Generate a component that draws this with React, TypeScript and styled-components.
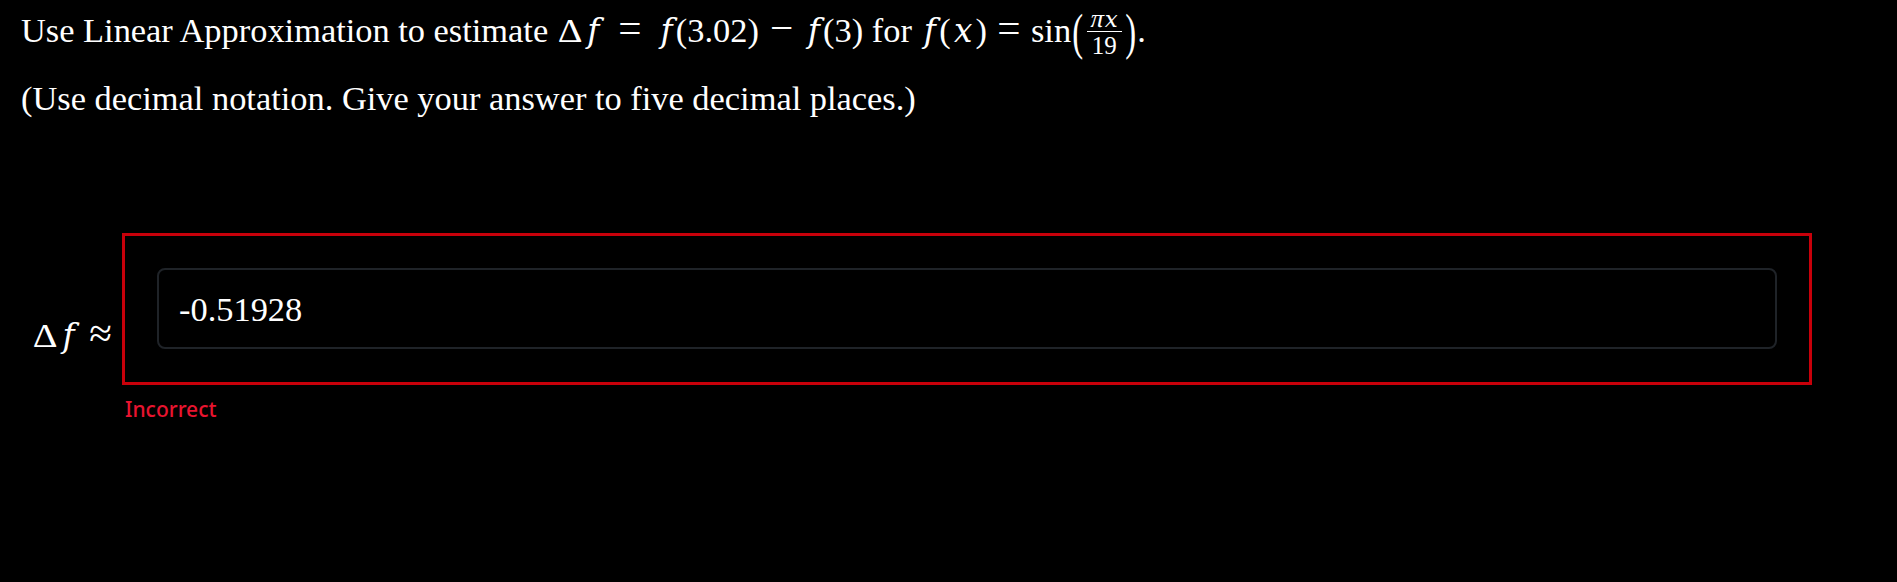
import React from 'react'
import styled, { createGlobalStyle } from 'styled-components'

const GlobalStyle = createGlobalStyle`
  body {
    margin: 0;
    background: #000;
    color: #fff;
    font-family: "Liberation Serif", "Times New Roman", serif;
  }
`

const App = (): React.ReactElement => (
  <>
    <GlobalStyle />
    <Page>
      <Paragraph $gap={30}>
        Use Linear Approximation to estimate{' '}
        <MathText>
          <Delta>Δ</Delta>
          <Var>f</Var>
          <Op $space={0.38}>=</Op>
          <Var>f</Var>(3.02)
          <Op $space={0.27}>−</Op>
          <Var>f</Var>(3)
        </MathText>{' '}
        for{' '}
        <MathText>
          <Var>f</Var>(<Var>x</Var>)
          <Op $space={0.25}>=</Op>
          sin
          <Paren>(</Paren>
          <Frac>
            <FracPart $top>
              <Pi>π</Pi>
              <Var>x</Var>
            </FracPart>
            <FracPart>19</FracPart>
          </Frac>
          <Paren>)</Paren>
        </MathText>
        .
      </Paragraph>
      <Paragraph $gap={0}>
        (Use decimal notation. Give your answer to five decimal places.)
      </Paragraph>

      <AnswerRow>
        <Label>
          <Delta>Δ</Delta>
          <Var>f</Var>
          <Op $space={0.28}>≈</Op>
        </Label>
        <FieldColumn>
          <ErrorFrame>
            <AnswerInput readOnly value="-0.51928" />
          </ErrorFrame>
          <Feedback>Incorrect</Feedback>
        </FieldColumn>
      </AnswerRow>
    </Page>
  </>
)

export default App

const Page = styled.div`
  padding: 8px 21px 0;
`

const Paragraph = styled.p<{ $gap: number }>`
  margin: 0 0 ${(p) => p.$gap}px;
  height: 40px;
  font-size: 34.4px;
  line-height: 40px;
  white-space: nowrap;
`

const MathText = styled.span`
  white-space: nowrap;
`

const Delta = styled.span`
  display: inline-block;
  transform: scaleX(1.12);
  margin: 0 3px 0 2px;
`

const Var = styled.i`
  margin: 0 0.1em;
  font-family: "DejaVu Serif", "Liberation Serif", serif;
  font-style: italic;
  font-size: 0.95em;
`

const Pi = styled.i`
  display: inline-block;
  font-style: normal;
  transform: skewX(-12deg);
  font-size: 1.05em;
  margin-right: 1px;
`

const Op = styled.span<{ $space: number }>`
  margin: 0 ${(p) => p.$space}em;
  font-size: 1.2em;
`

const Paren = styled.span`
  display: inline-block;
  transform: scale(0.95, 1.45);
  transform-origin: center;
  vertical-align: -2px;
  margin: 0 1px;
`

const Frac = styled.span`
  display: inline-flex;
  flex-direction: column;
  align-items: center;
  font-size: 25px;
  line-height: 22px;
  vertical-align: 15px;
  margin: -14px 2px;
`

const FracPart = styled.span<{ $top?: boolean }>`
  padding: ${(p) => (p.$top ? '0 4px 1px' : '3px 4px 0')};
  border-bottom: ${(p) => (p.$top ? '1.5px solid #fff' : 'none')};

  ${Var} {
    margin: 0;
    font-size: 0.92em;
  }
`

const AnswerRow = styled.div`
  display: flex;
  align-items: flex-start;
  margin-top: 115px;
  padding: 0 64px 0 11px;
`

const Label = styled.div`
  width: 78px;
  margin: 80px 12px 0 0;
  font-size: 34.4px;
  line-height: 40px;
  white-space: nowrap;
`

const FieldColumn = styled.div`
  flex: 1;
  display: flex;
  flex-direction: column;
`

const ErrorFrame = styled.div`
  border: 3px solid #c8000a;
  padding: 32px 32px 33px;
`

const AnswerInput = styled.input`
  display: block;
  width: 100%;
  box-sizing: border-box;
  height: 81px;
  padding: 2px 20px 0;
  border: 2px solid #1f2328;
  border-radius: 8px;
  background: #000;
  color: #fff;
  font-family: "Liberation Serif", "Times New Roman", serif;
  font-size: 34.4px;
  outline: none;
`

const Feedback = styled.div`
  margin-top: 12px;
  padding-left: 3px;
  color: #e8142f;
  font-family: "Noto Sans", "Open Sans", sans-serif;
  font-size: 21px;
  font-weight: 500;
  line-height: 24px;
`
